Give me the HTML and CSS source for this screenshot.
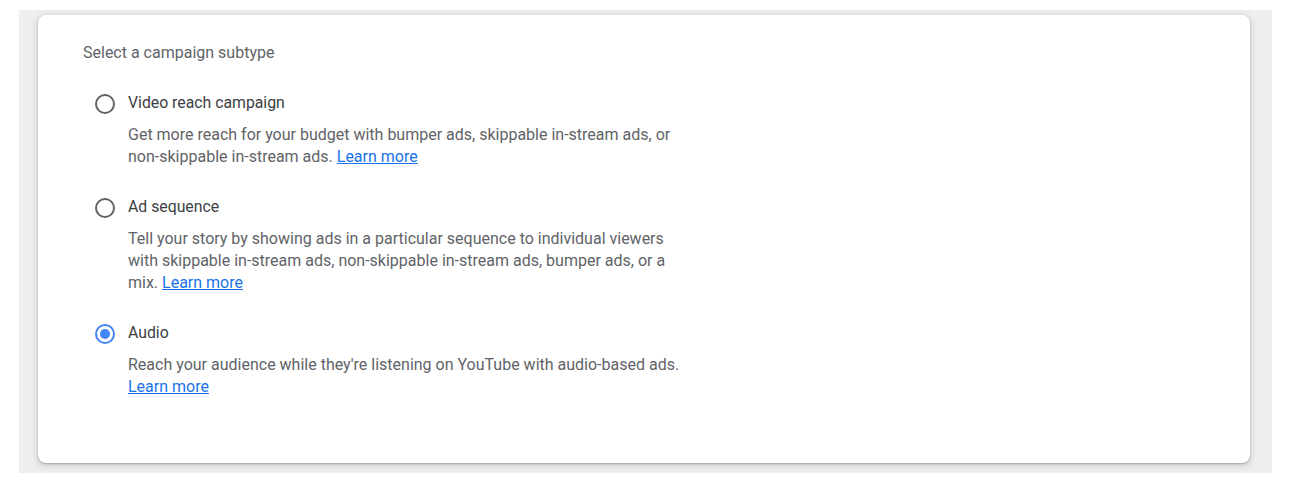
FILE: index.html
```html
<!DOCTYPE html>
<html lang="en">
<head>
  <meta charset="UTF-8" />
  <title>Campaign subtype</title>
  <link rel="stylesheet" href="styles.css">
</head>
<body>
  <div class="panel">
    <div class="card">
      <div class="card-title">Select a campaign subtype</div>

      <label class="option">
        <span class="radio"></span>
        <div class="option-body">
          <div class="option-label">Video reach campaign</div>
          <p class="option-desc">Get more reach for your budget with bumper ads, skippable in-stream ads, or <span class="nowrap">non-skippable</span> in-stream ads. <a href="#">Learn more</a></p>
        </div>
      </label>

      <label class="option">
        <span class="radio"></span>
        <div class="option-body">
          <div class="option-label">Ad sequence</div>
          <p class="option-desc">Tell your story by showing ads in a particular sequence to individual viewers with skippable in-stream ads, <span class="nowrap">non-skippable</span> in-stream ads, bumper ads, or a mix. <a href="#">Learn more</a></p>
        </div>
      </label>

      <label class="option">
        <span class="radio checked"></span>
        <div class="option-body">
          <div class="option-label">Audio</div>
          <p class="option-desc">Reach your audience while they're listening on YouTube with audio-based ads. <a href="#">Learn more</a></p>
        </div>
      </label>
    </div>
  </div>
</body>
</html>
```

FILE: styles.css
```css
body {
  margin: 0;
  background: #fff;
  font-family: Roboto, "Liberation Sans", sans-serif;
  color: #3c4043;
}
.panel {
  margin: 10px 23px 0 19px;
  padding: 5px 22px 10px 19px;
  background: #eeeff1;
}
.card {
  box-sizing: border-box;
  height: 448px;
  background: #fff;
  border-radius: 8px;
  box-shadow: 0 1px 2px rgba(60,64,67,0.35), 0 2px 6px 2px rgba(60,64,67,0.15);
  padding: 28px 45px 0 45px;
}
.card-title {
  font-size: 16px;
  line-height: 20px;
  color: #5f6368;
  margin-bottom: 30px;
}
.option {
  display: flex;
  gap: 13px;
  margin-left: 12px;
  margin-bottom: 29px;
}
.radio {
  width: 16px;
  height: 16px;
  border: 2px solid #5f6368;
  border-radius: 50%;
  flex-shrink: 0;
  margin-top: 1px;
  position: relative;
}
.radio.checked {
  border-color: #4285f4;
}
.radio.checked::after {
  content: "";
  position: absolute;
  left: 3px;
  top: 3px;
  width: 10px;
  height: 10px;
  border-radius: 50%;
  background: #4285f4;
}
.option-label {
  font-size: 15.8px;
  line-height: 20px;
  color: #3c4043;
}
.option-desc {
  margin: 11px 0 0;
  max-width: 560px;
  font-size: 16px;
  line-height: 22px;
  color: #5f6368;
}
.nowrap {
  white-space: nowrap;
}
.option-desc a {
  color: #1a73e8;
  text-decoration: underline;
}
```
